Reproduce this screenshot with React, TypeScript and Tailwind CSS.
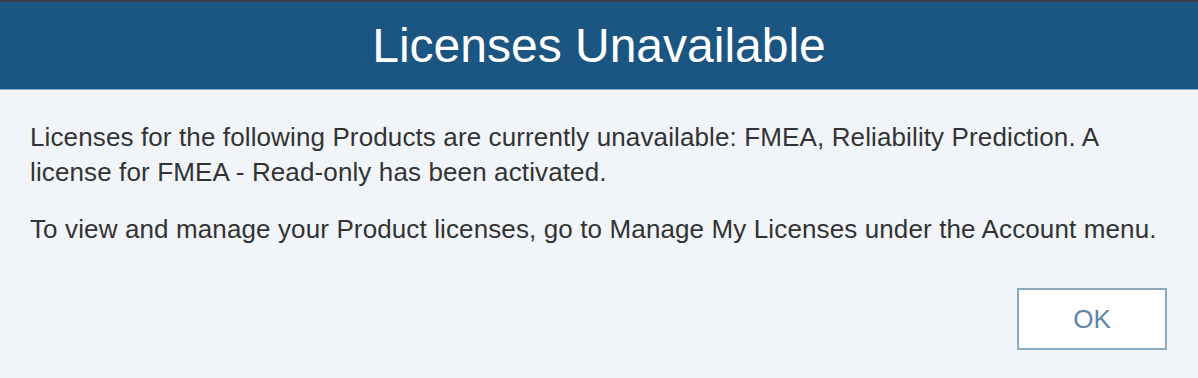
export default function App() {
  return (
    <div className="w-[1198px] h-[378px] flex flex-col bg-[#f1f5f9] font-['Liberation_Sans',Arial,sans-serif]">
      <div className="h-[2px] bg-[#3b3e45]" />
      <header className="h-[88px] flex items-center justify-center bg-[#1b5581] border-b border-[#8eaecb]">
        <h1 className="text-[48px] leading-none text-white">Licenses Unavailable</h1>
      </header>

      <main className="flex-1 flex flex-col pl-[30px] pr-[31px] pt-[30px]">
        <p className="text-[26px] leading-[35px] tracking-[0.12px] text-[#333333]">
          Licenses for the following Products are currently unavailable: FMEA, Reliability Prediction. A
          license for FMEA - Read-only has been activated.
        </p>
        <p className="mt-[22px] text-[26px] leading-[35px] tracking-[0.12px] text-[#333333]">
          To view and manage your Product licenses, go to Manage My Licenses under the Account menu.
        </p>

        <div className="flex justify-end mt-[41px]">
          <button className="w-[150px] h-[62px] bg-white border-2 border-[#8fa9bf] text-[26px] text-[#5f86a6]">
            OK
          </button>
        </div>
      </main>
    </div>
  );
}
